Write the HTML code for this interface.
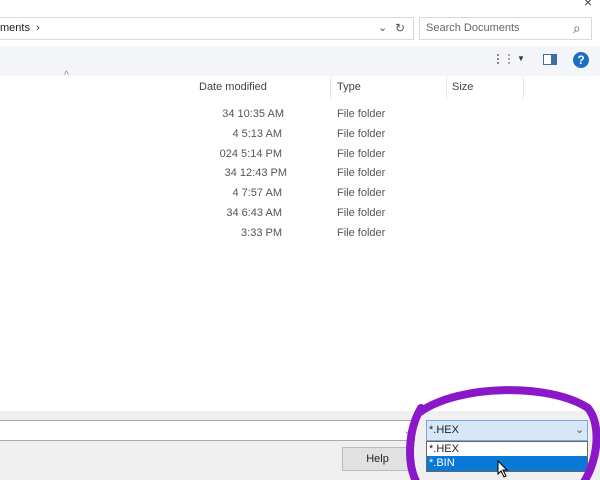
<!DOCTYPE html>
<html><head><meta charset="utf-8"><style>
body{margin:0;width:600px;height:480px;overflow:hidden;background:#fff;font-family:"Liberation Sans",sans-serif;font-size:11px;color:#222;position:relative}
.a{position:absolute}
.row{position:absolute;color:#555;font-size:11px}
</style></head><body>
<div class="a" style="right:8px;top:-6px;font-size:14px;color:#444">×</div>
<div class="a" style="left:-1px;top:17px;width:415px;height:23px;border:1px solid #d9d9d9;box-sizing:border-box"></div>
<div class="a" style="left:0;top:22px;font-size:11px">ments &nbsp;›</div>
<div class="a" style="left:378px;top:21px;font-size:11px;color:#555">⌄</div>
<div class="a" style="left:395px;top:21px;font-size:12px;color:#555">↻</div>
<div class="a" style="left:419px;top:17px;width:173px;height:23px;border:1px solid #d9d9d9;box-sizing:border-box"></div>
<div class="a" style="left:426px;top:22px;color:#666">Search Documents</div>
<div class="a" style="left:573px;top:20px;color:#555;font-size:14px">⌕</div>
<div class="a" style="left:0;top:46px;width:600px;height:30px;background:#f3f5f8"></div>
<div class="a" style="left:497px;top:54px;width:13px;height:10px;border-left:2px dotted #888;border-right:2px dotted #aaa;box-sizing:border-box"></div>
<div class="a" style="left:517px;top:54px;font-size:8px;color:#333">▼</div>
<div class="a" style="left:543px;top:54px;width:14px;height:11px;border:1px solid #3a6ea5;background:linear-gradient(90deg,#fff 60%,#3a6ea5 60%);box-sizing:border-box"></div>
<div class="a" style="left:573px;top:52px;width:16px;height:16px;border-radius:50%;background:#1a6fc4;color:#fff;font-weight:bold;font-size:12px;text-align:center;line-height:16px">?</div>
<div class="a" style="left:64px;top:70px;color:#888;font-size:10px">^</div>
<div class="a" style="left:199px;top:81px;color:#444">Date modified</div>
<div class="a" style="left:330px;top:77px;width:1px;height:22px;background:#e5e5e5"></div>
<div class="a" style="left:337px;top:81px;color:#444">Type</div>
<div class="a" style="left:446px;top:77px;width:1px;height:22px;background:#e5e5e5"></div>
<div class="a" style="left:452px;top:81px;color:#444">Size</div>
<div class="a" style="left:523px;top:77px;width:1px;height:22px;background:#e5e5e5"></div>

<div class="row" style="right:316px;top:108px">34 10:35 AM</div><div class="row" style="left:337px;top:108px">File folder</div>
<div class="row" style="right:318px;top:128px">4 5:13 AM</div><div class="row" style="left:337px;top:128px">File folder</div>
<div class="row" style="right:318px;top:148px">024 5:14 PM</div><div class="row" style="left:337px;top:148px">File folder</div>
<div class="row" style="right:313px;top:167px">34 12:43 PM</div><div class="row" style="left:337px;top:167px">File folder</div>
<div class="row" style="right:318px;top:187px">4 7:57 AM</div><div class="row" style="left:337px;top:187px">File folder</div>
<div class="row" style="right:318px;top:207px">34 6:43 AM</div><div class="row" style="left:337px;top:207px">File folder</div>
<div class="row" style="right:318px;top:227px">3:33 PM</div><div class="row" style="left:337px;top:227px">File folder</div>

<div class="a" style="left:0;top:411px;width:600px;height:69px;background:#f0f0f0"></div>
<div class="a" style="left:-1px;top:420px;width:416px;height:21px;border:1px solid #aaa;background:#fff;box-sizing:border-box"></div>
<div class="a" style="left:403px;top:424px;color:#888">⌄</div>
<div class="a" style="left:342px;top:447px;width:71px;height:24px;border:1px solid #bbb;background:#e1e1e1;box-sizing:border-box;text-align:center;line-height:22px;font-size:11px">Help</div>
<div class="a" style="left:426px;top:420px;width:162px;height:21px;border:1px solid #7aa7d8;background:#d7e7f7;box-sizing:border-box"></div>
<div class="a" style="left:429px;top:424px;font-size:11px">*.HEX</div>
<div class="a" style="left:575px;top:423px;color:#555">⌄</div>
<div class="a" style="left:426px;top:441px;width:162px;height:31px;border:1px solid #666;background:#fff;box-sizing:border-box"></div>
<div class="a" style="left:429px;top:443px">*.HEX</div>
<div class="a" style="left:427px;top:456px;width:160px;height:15px;background:#0a78d7;color:#fff;line-height:15px;padding-left:2px;box-sizing:border-box">*.BIN</div>
<svg class="a" style="left:497px;top:460px" width="12" height="18"><path d="M1 1 L1 14 L4 11 L7 17 L9 16 L6 10 L10 10 Z" fill="#fff" stroke="#000" stroke-width="1"/></svg>
<svg class="a" style="left:0;top:0" width="600" height="480"><path d="M421 408 C408 430 406 465 418 485 M420 412 C460 384 550 383 588 408 C602 425 598 462 582 485" fill="none" stroke="#8a18c8" stroke-width="8" stroke-linecap="round"/></svg>
</body></html>
